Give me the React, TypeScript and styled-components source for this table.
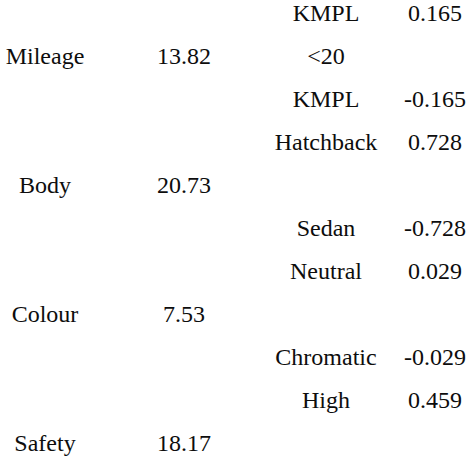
import React from "react";
import styled, { createGlobalStyle } from "styled-components";

const GlobalStyle = createGlobalStyle`
  html, body {
    margin: 0;
    padding: 0;
    background: #ffffff;
    overflow: hidden;
  }
`;

type Row = [string, string, string, string];

// attribute, importance, level, utility — level labels wrap onto their own lines
const rows: Row[] = [
  ["", "", "KMPL", "0.165"],
  ["Mileage", "13.82", "<20", ""],
  ["", "", "KMPL", "-0.165"],
  ["", "", "Hatchback", "0.728"],
  ["Body", "20.73", "", ""],
  ["", "", "Sedan", "-0.728"],
  ["", "", "Neutral", "0.029"],
  ["Colour", "7.53", "", ""],
  ["", "", "Chromatic", "-0.029"],
  ["", "", "High", "0.459"],
  ["Safety", "18.17", "", ""],
];

const Table = styled.div`
  display: grid;
  grid-template-columns: 90px 188px 96px 1fr;
  grid-auto-rows: 43px;
  width: 474px;
  margin-top: -8px;
  font-family: "Liberation Serif", "Times New Roman", serif;
  font-size: 24px;
  line-height: 43px;
  color: #0d0d0d;
`;

const Cell = styled.div<{ $offset?: number }>`
  display: flex;
  justify-content: center;
  white-space: nowrap;
  padding-left: ${(p) => p.$offset ?? 0}px;
`;

export default function App() {
  return (
    <>
      <GlobalStyle />
      <Table>
        {rows.map((r, i) => (
          <React.Fragment key={i}>
            <Cell>{r[0]}</Cell>
            <Cell>{r[1]}</Cell>
            <Cell>{r[2]}</Cell>
            <Cell $offset={22}>{r[3]}</Cell>
          </React.Fragment>
        ))}
      </Table>
    </>
  );
}
